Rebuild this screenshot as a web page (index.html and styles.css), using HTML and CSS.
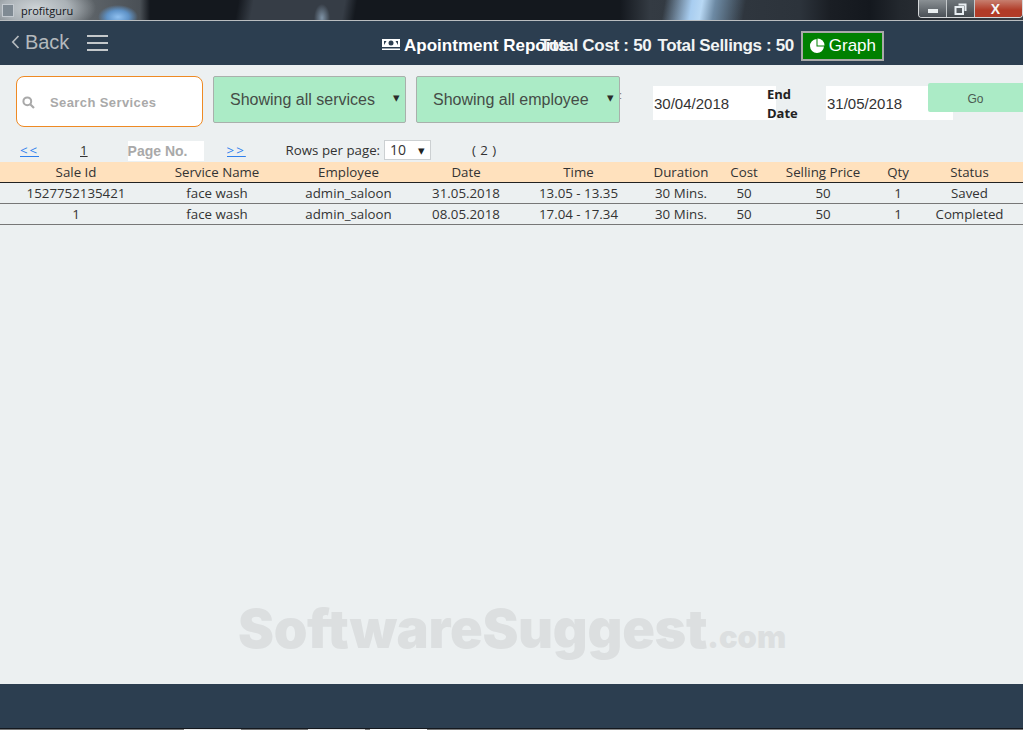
FILE: index.html
```html
<!DOCTYPE html>
<html lang="en">
<head>
<meta charset="utf-8">
<title>profitguru</title>
<link rel="stylesheet" href="styles.css">
</head>
<body>
<div class="window">
  <div class="titlebar">
    <span class="app-icon"></span>
    <span class="app-name">profitguru</span>
    <div class="win-controls">
      <span class="win-btn win-min"><i class="min-glyph"></i></span>
      <span class="win-btn win-max"><svg width="13" height="12" viewBox="0 0 13 12"><path d="M4.500 1.500h7v6.500M1.500 4h7.500v7h-7.500z" fill="none" stroke="#e8eef2" stroke-width="2"/></svg></span>
      <span class="win-btn win-close">X</span>
    </div>
  </div>
  <header class="topbar">
    <a class="back"><svg class="chev" width="9" height="16" viewBox="0 0 9 16"><path d="M7.500 2 L1.800 8 L7.500 14" fill="none" stroke="#b4b9bd" stroke-width="1.700"/></svg>Back</a>
    <span class="burger"><i></i><i></i><i></i></span>
    <svg class="money" width="18" height="11" viewBox="0 0 18 11"><path d="M0 0h18v8H0z" fill="#fff"/><path d="M0 9.500h18v1.500H0z" fill="#fff"/><circle cx="9" cy="4" r="2.500" fill="#2c3e50"/><path d="M2 2h2.500L2 6zM16 2h-2.500L16 6z" fill="#2c3e50"/></svg>
    <span class="report-title">Apointment Reports</span>
    <span class="total total-cost">Total Cost : 50</span>
    <span class="total total-sell">Total Sellings : 50</span>
    <a class="graph-btn"><svg width="16" height="16" viewBox="0 0 16 16"><path d="M7.500 1A7 7 0 1 0 15 8.500H7.500z" fill="#fff"/><path d="M8.500 0.500A7 7 0 0 1 15.500 7.500H8.500z" fill="#fff"/></svg>Graph</a>
  </header>
  <main class="content">
    <div class="filters">
      <label class="search">
        <svg width="13" height="13" viewBox="0 0 13 13"><circle cx="5.300" cy="5.300" r="3.900" fill="none" stroke="#a9a9a9" stroke-width="2"/><path d="M8.200 8.200L12 12" stroke="#a9a9a9" stroke-width="2.200"/></svg>
        <span class="search-text">Search Services</span>
      </label>
      <div class="select select-services"><span>Showing all services</span><b>▾</b></div>
      <div class="select select-employee"><span>Showing all employee</span><b>▾</b></div>
      <span class="colon">:</span>
      <div class="date date-start">30/04/2018</div>
      <div class="end-label">End<br>Date</div>
      <div class="date date-end">31/05/2018</div>
      <div class="go">Go</div>
    </div>
    <div class="pager">
      <a class="pg-link pg-prev">&lt;&lt;</a>
      <span class="pg-num">1</span>
      <span class="pg-input">Page No.</span>
      <a class="pg-link pg-next">&gt;&gt;</a>
      <span class="pg-rows">Rows per page:</span>
      <span class="pg-select">10<b>▾</b></span>
      <span class="pg-count">( 2 )</span>
    </div>
    <table class="grid">
      <colgroup>
        <col class="c1"><col class="c2"><col class="c3"><col class="c4"><col class="c5"><col class="c6"><col class="c7"><col class="c8"><col class="c9"><col class="c10">
      </colgroup>
      <thead>
        <tr><th>Sale Id</th><th>Service Name</th><th>Employee</th><th>Date</th><th>Time</th><th>Duration</th><th>Cost</th><th>Selling Price</th><th>Qty</th><th>Status</th></tr>
      </thead>
      <tbody>
        <tr><td>1527752135421</td><td>face wash</td><td>admin_saloon</td><td>31.05.2018</td><td>13.05 - 13.35</td><td>30 Mins.</td><td>50</td><td>50</td><td>1</td><td>Saved</td></tr>
        <tr><td>1</td><td>face wash</td><td>admin_saloon</td><td>08.05.2018</td><td>17.04 - 17.34</td><td>30 Mins.</td><td>50</td><td>50</td><td>1</td><td>Completed</td></tr>
      </tbody>
    </table>
    <div class="watermark">SoftwareSuggest<span>.com</span></div>
  </main>
  <footer class="footer"></footer>
  <div class="taskstrip"></div>
</div>
</body>
</html>
```
FILE: styles.css
```css
* { box-sizing: border-box; }
html, body { margin: 0; padding: 0; }
body { width: 1023px; height: 730px; overflow: hidden; font-family: "Liberation Sans", Arial, sans-serif; background: #ecf0f1; }
.window { width: 1023px; height: 730px; display: flex; flex-direction: column; }

.titlebar {
  height: 21px; flex: none; display: flex; align-items: center; position: relative;
  border-bottom: 1px solid #b9bdc0;
  background:
    radial-gradient(ellipse 20px 12px at 118px 17px, #8fc0f0 0%, #5f93c8 55%, rgba(60,90,130,0) 100%),
    radial-gradient(ellipse 60px 26px at 36px 8px, #cdd3d6 0%, #aab1b6 55%, rgba(80,90,100,0) 100%),
    radial-gradient(ellipse 8px 14px at 322px 18px, #7f93a6 0%, rgba(60,70,80,0) 100%),
    linear-gradient(100deg, rgba(168,205,240,0) 655px, #a8cdf0 682px, #b8d8f4 692px, #6d8aa4 705px, rgba(60,70,80,0) 735px),
    linear-gradient(100deg, rgba(0,0,0,0) 235px, #363d46 250px, #363d46 340px, rgba(0,0,0,0) 352px),
    linear-gradient(90deg, #70777c 0, #5d6368 90px, #4a5056 140px, #14181e 150px, #14181e 620px, #343b43 650px, #2c333b 800px, #1a1e24 830px, #14181e 870px, #23282e 900px, #3a3f45 1023px);
}
.app-icon { width: 12px; height: 13px; margin-left: 2px; background: #7f8a93; border: 1px solid #c4cad0; }
.app-name { margin-left: 7px; font-family: "Open Sans", sans-serif; font-size: 11px; color: #12161c; }
.win-controls {
  position: absolute; right: 0; top: 0; height: 18px; width: 105px; display: flex;
  border: 1px solid #d5d8da; border-top: 0; border-radius: 0 0 4px 4px; overflow: hidden;
}
.win-btn { display: flex; align-items: center; justify-content: center; height: 100%; }
.win-min { width: 28px; background: linear-gradient(#8a9094, #4a5056); border-right: 1px solid #c4c8ca; }
.min-glyph { width: 10px; height: 4px; background: #e9eef0; margin-top: 4px; }
.win-max { width: 28px; background: linear-gradient(#6f767b, #454b50); border-right: 1px solid #c4c8ca; }
.win-close { flex: 1; padding-right: 6px; background: linear-gradient(#c77f6f, #b13b27 60%); color: #f4f4f4; font-size: 14px; font-weight: 700; }

.topbar { height: 44px; flex: none; padding-top: 5px; background: #2c3e50; display: flex; align-items: center; color: #fff; }
.back { margin-left: 11px; margin-bottom: 7px; display: flex; align-items: center; color: #b4b9bd; font-size: 20px; letter-spacing: -0.1px; }
.chev { margin-right: 5px; }
.burger { margin-left: 18px; margin-bottom: 5px; width: 21px; display: flex; flex-direction: column; gap: 5px; }
.burger i { display: block; height: 2px; background: #c4c8cb; }
.money { margin-left: 274px; margin-bottom: 2px; }
.report-title { margin-left: 4px; width: 136px; white-space: nowrap; font-size: 17px; font-weight: 700; }
.total { font-weight: 700; font-size: 17px; white-space: nowrap; letter-spacing: -0.3px; color: #f2f4f5; }
.total-sell { margin-left: 6px; letter-spacing: -0.36px; }
.graph-btn {
  margin-left: 7px; width: 83px; height: 30px; display: flex; align-items: center; justify-content: center; gap: 4px;
  background: #008000; border: 2px solid #a9a9a9; font-size: 17px; color: #fff;
}

.content { flex: 1; position: relative; background: #ecf0f1; }
.filters { height: 74px; padding: 11px 0 0 16px; display: flex; align-items: flex-start; }
.search {
  width: 187px; height: 51px; background: #fff; border: 1px solid #ee8a24; border-radius: 8px;
  display: flex; align-items: center; padding: 2px 0 0 5px;
}
.search-text { margin-left: 15px; color: #a9a9a9; font-size: 13px; font-weight: 700; letter-spacing: .4px; }
.select {
  height: 47px; background: #abebc6; border: 1px solid #a9b0ac; border-radius: 2px; display: flex; align-items: center;
  color: #454d47; font-size: 16px; position: relative;
}
.select b { position: absolute; right: 5px; top: 13px; font-size: 13px; color: #2b2b2b; font-weight: 400; }
.select-services { width: 193px; margin-left: 10px; padding-left: 16px; }
.select-employee { width: 204px; margin-left: 10px; padding-left: 16px; }
.colon { width: 33px; color: #777; font-size: 11px; margin-top: 13px; margin-left: -1px; margin-right: 1px; flex: none; }
.date { height: 34px; margin-top: 10px; background: #fff; color: #333; font-size: 15px; padding: 9px 0 0 1px; }
.date-start { width: 123px; }
.end-label { width: 59px; margin-left: -9px; margin-top: 9px; font-size: 13px; font-weight: 700; color: #222; line-height: 19px; font-family: "Open Sans", sans-serif; position: relative; }
.date-end { width: 127px; }
.go {
  width: 95px; height: 29px; margin-left: -25px; margin-top: 7px; padding-top: 2px; background: #abebc6; color: #4c5b52; font-size: 12px;
  display: flex; align-items: center; justify-content: center; border-radius: 2px 0 0 2px; position: relative;
}

.pager { height: 23px; display: flex; align-items: center; padding-bottom: 2px; font-family: "Open Sans", sans-serif; font-size: 13.300px; color: #333; }
.pg-link { color: #2f80ed; text-decoration: underline; letter-spacing: 2px; width: 19px; white-space: nowrap; overflow: hidden; }
.pg-prev { margin-left: 20px; }
.pg-num { margin-left: 41px; text-decoration: underline; }
.pg-input { margin-left: 40px; width: 76px; height: 20px; margin-top: 2px; background: #fff; color: #a9a9a9; font-family: "Liberation Sans", sans-serif; font-weight: 700; font-size: 14px; line-height: 20px; }
.pg-next { margin-left: 23px; }
.pg-rows { margin-left: 40px; white-space: nowrap; }
.pg-select { margin-left: 4px; width: 47px; height: 20px; background: #fff; border: 1px solid #ccd0d2; display: flex; align-items: center; justify-content: space-between; padding: 0 5px; font-size: 14px; }
.pg-select b { font-weight: 400; color: #222; font-size: 13px; }
.pg-count { margin-left: 41px; letter-spacing: .4px; }

.grid { width: 1023px; border-collapse: collapse; table-layout: fixed; font-family: "Open Sans", sans-serif; font-size: 13.300px; color: #333; }
.c1 { width: 152px; } .c2 { width: 130px; } .c3 { width: 133px; } .c4 { width: 102px; } .c5 { width: 123px; }
.c6 { width: 82px; } .c7 { width: 44px; } .c8 { width: 114px; } .c9 { width: 36px; } .c10 { width: 107px; }
.grid th { height: 20px; padding: 0; background: #ffe1bd; font-weight: 400; border-bottom: 1px solid #222; }
.grid td { height: 21px; padding: 0; text-align: center; border-bottom: 1px solid #777; }

.watermark {
  position: absolute; left: 238px; top: 534px; color: #dcdfe0; font-family: "Inter", sans-serif; font-weight: 900; font-size: 54px; letter-spacing: -0.3px; white-space: nowrap; line-height: 60px;
}
.watermark span { font-size: 31px; letter-spacing: 0; }

.footer { height: 44px; flex: none; background: #2c3e50; }
.taskstrip {
  height: 2px; flex: none; border-top: 1px solid #14181e;
  background: linear-gradient(90deg, #777 0, #777 184px, #eee 184px, #ddd 241px, #777 241px, #777 308px, #eee 308px, #ddd 365px, #777 365px, #777 370px, #fff 370px, #fff 427px, #777 427px, #888 640px, #777 1023px);
}
```
